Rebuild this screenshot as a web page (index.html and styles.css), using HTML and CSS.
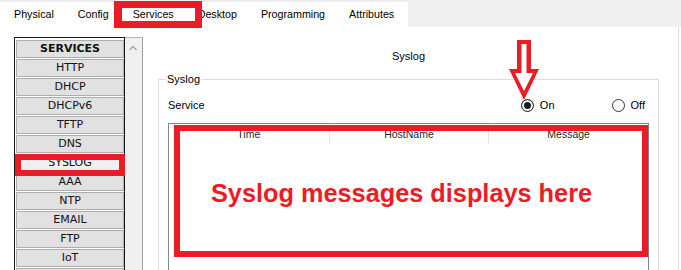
FILE: index.html
```html
<!DOCTYPE html>
<html lang="en">
<head>
    <meta charset="UTF-8">
    <meta name="viewport" content="width=device-width, initial-scale=1.0">
    <title>Services - Syslog</title>
    <link rel="stylesheet" href="styles.css">
</head>
<body>
    <div class="tabbar">
        <div class="tabs">
            <span class="tab">Physical</span>
            <span class="tab">Config</span>
            <span class="tab active">Services<span class="mark mark-tab"></span></span>
            <span class="tab">Desktop</span>
            <span class="tab">Programming</span>
            <span class="tab">Attributes</span>
        </div>
    </div>

    <div class="main">
        <div class="sidebar">
            <div class="list">
                <div class="item head">SERVICES</div>
                <div class="item">HTTP</div>
                <div class="item">DHCP</div>
                <div class="item">DHCPv6</div>
                <div class="item">TFTP</div>
                <div class="item">DNS</div>
                <div class="item selected">SYSLOG<span class="mark mark-item"></span></div>
                <div class="item">AAA</div>
                <div class="item">NTP</div>
                <div class="item">EMAIL</div>
                <div class="item">FTP</div>
                <div class="item">IoT</div>
                <div class="item"></div>
            </div>
            <div class="scroll">
                <svg width="16" height="14" viewBox="0 0 16 14">
                    <polyline points="4.5,11 8,7.5 11.5,11" fill="none" stroke="#a6a6a6" stroke-width="1.5"/>
                </svg>
            </div>
        </div>

        <div class="panel">
            <div class="title">Syslog</div>
            <fieldset class="group">
                <legend>Syslog</legend>
                <div class="service-row">
                    <span class="service-label">Service</span>
                    <label class="radio"><span class="dot checked"></span>On</label>
                    <label class="radio radio-off"><span class="dot"></span>Off</label>
                </div>
                <div class="log-table">
                    <div class="log-head">
                        <span>Time</span>
                        <span>HostName</span>
                        <span>Message</span>
                    </div>
                    <div class="mark mark-table">Syslog messages displays here</div>
                </div>
            </fieldset>

            <!-- annotation arrow pointing at the On radio -->
            <svg class="arrow" width="40" height="64" viewBox="505 38 40 64">
                <polygon points="517,40 531,40 531,69 539,69 524,100 509,69 517,69" fill="#ed1c24"/>
                <polygon points="521.5,44 526.5,44 526.5,73 533,73 524,91 515,73 521.5,73" fill="#fff"/>
            </svg>
        </div>
        <div class="edge"></div>
    </div>
</body>
</html>
```

FILE: styles.css
```css
body {
    margin: 0;
    width: 681px;
    height: 270px;
    overflow: hidden;
    background: #fff;
    color: #000;
    font-family: "Liberation Sans", Arial, sans-serif;
    font-size: 11px;
}

/* annotation boxes */
.mark {
    position: absolute;
    box-sizing: border-box;
    border: 6px solid #ed1c24;
}

.tabbar {
    height: 27px;
    padding-top: 2px;
    box-sizing: border-box;
    background: #f0f0f0;
}
.tabs {
    display: flex;
    align-items: center;
    width: 408px;
    height: 25px;
    padding-left: 2px;
    box-sizing: border-box;
    background: #fff;
}
.tab {
    padding: 0 12px;
    line-height: 13px;
    font-size: 10.7px;
    white-space: nowrap;
}
.tab.active {
    position: relative;
}
.mark-tab {
    left: -7px;
    right: -16px;
    top: -7px;
    bottom: -7px;
    border-width: 7px 7px 7px 8px;
}

.main {
    display: flex;
    height: 243px;
}

.sidebar {
    display: flex;
    align-items: flex-start;
    padding: 10px 0 0 14px;
}
.list {
    width: 111px;
    height: 260px;
    padding-top: 2px;
    box-sizing: border-box;
    border: 1px solid #1a1a1a;
    border-bottom: none;
}
.item {
    width: 108px;
    height: 18px;
    margin: 0 0 1px 1px;
    box-sizing: border-box;
    border: 1px solid #adadad;
    background: #e1e1e1;
    color: #111;
    text-align: center;
    line-height: 16px;
    font-family: "DejaVu Sans", Verdana, sans-serif;
    font-size: 11px;
    white-space: nowrap;
    overflow: hidden;
}
.item.head {
    font-weight: bold;
}
.item.selected {
    position: relative;
    overflow: visible;
    background: #f0f0f0;
}
.mark-item {
    left: -2px;
    right: -2px;
    top: -1px;
    bottom: -5px;
}
.scroll {
    width: 18px;
    height: 260px;
    box-sizing: border-box;
    border-top: 1px solid #b4b4b4;
    border-right: 1px solid #a0a0a0;
    background: #f0f0f0;
}
.scroll svg {
    display: block;
    margin-top: 1px;
}

.panel {
    position: relative;
    flex: 1;
    border-right: 1px solid #dcdcdc;
}
.edge {
    width: 2px;
}
.title {
    margin-top: 22px;
    padding-right: 4px;
    line-height: 14px;
    text-align: center;
}

.group {
    margin: 9px 19px 0 15px;
    padding: 0 9px;
    height: 220px;
    border: 1px solid #dcdcdc;
    min-width: 0;
}
.group legend {
    margin-left: -2px;
    padding: 0 1px;
    line-height: 14px;
}

.service-row {
    display: flex;
    align-items: center;
    height: 16px;
    margin-top: 11px;
    padding-right: 4px;
}
.service-label {
    flex: 1;
}
.radio {
    display: flex;
    align-items: center;
    gap: 6px;
}
.radio-off {
    margin-left: 57px;
}
.dot {
    width: 13px;
    height: 13px;
    box-sizing: border-box;
    border: 1px solid #333;
    border-radius: 50%;
    background: #fff;
}
.dot.checked {
    background: #1e1e1e;
    box-shadow: inset 0 0 0 2px #fff;
}

.log-table {
    position: relative;
    height: 200px;
    margin-top: 10px;
    border: 1px solid #828790;
    background: #fff;
}
.log-head {
    display: grid;
    grid-template-columns: repeat(3, 1fr);
    height: 20px;
}
.log-head span {
    text-align: center;
    line-height: 20px;
    font-size: 10.5px;
    color: #1f1f1f;
}
.log-head span + span {
    border-left: 1px solid #e3e3e3;
}
.mark-table {
    left: 5px;
    top: 1px;
    width: 474px;
    height: 132px;
    display: flex;
    align-items: center;
    padding: 4px 0 0 31px;
    color: #ed1c24;
    font-weight: bold;
    font-size: 25.3px;
    white-space: nowrap;
}

.arrow {
    position: absolute;
    left: 362px;
    top: 11px;
}
```
